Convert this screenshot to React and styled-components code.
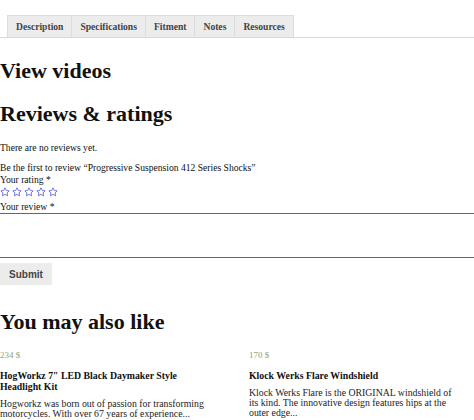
import React from 'react'
import styled, { createGlobalStyle } from 'styled-components'

const TABS = ['Description', 'Specifications', 'Fitment', 'Notes', 'Resources']

const PRODUCTS = [{
  price: '234 $',
  title: 'HogWorkz 7″ LED Black Daymaker Style Headlight Kit',
  excerpt: 'Hogworkz was born out of passion for transforming motorcycles. With over 67 years of experience...'
}, {
  price: '170 $',
  title: 'Klock Werks Flare Windshield',
  excerpt: 'Klock Werks Flare is the ORIGINAL windshield of its kind. The innovative design features hips at the outer edge...'
}]

const GlobalStyle = createGlobalStyle`
  body {
    margin: 0;
    background: #fff;
    color: #111;
    font-family: "Liberation Serif", "Times New Roman", serif;
    font-size: 9.6px;
  }
`

const Page = styled.div`
  width: 474px;
  height: 420px;
  overflow: hidden;
`

const TabBar = styled.ul`
  display: flex;
  list-style: none;
  margin: 0;
  padding: 15px 0 0 7px;
  border-bottom: 1px solid #d8d8d8;
`

const Tab = styled.li`
  padding: 0 8px;
  height: 21px;
  line-height: 21px;
  background: #ececec;
  border: 1px solid #dcdcdc;
  border-bottom: none;
  margin-right: -1px;
  font-weight: bold;
  font-size: 9.6px;
  color: #444;
`

const Heading = styled.h2`
  font-size: 22px;
  line-height: 25px;
  font-weight: bold;
  margin: ${props => props.top}px 0 0;
`

const Text = styled.p`
  margin: ${props => props.top || 0}px 0 0;
  line-height: 12px;
`

const Stars = styled.div`
  display: flex;
  gap: 2px;
  height: 12px;
  align-items: center;
  margin-bottom: 3px;
`

const Star = () => (
  <svg width='10' height='10' viewBox='0 0 24 24' fill='none' stroke='#4a4ad8' strokeWidth='1.8' strokeLinejoin='round'>
    <polygon points='12 2 15.09 8.26 22 9.27 17 14.14 18.18 21.02 12 17.77 5.82 21.02 7 14.14 2 9.27 8.91 8.26 12 2' />
  </svg>
)

const Review = styled.textarea`
  display: block;
  width: 100%;
  height: 45px;
  box-sizing: border-box;
  margin: 0;
  border: none;
  border-top: 1px solid #666;
  border-bottom: 1px solid #666;
  resize: none;
  outline: none;
`

const SubmitButton = styled.button`
  display: block;
  margin-top: 5px;
  width: 52px;
  height: 22px;
  border: none;
  background: #ececec;
  color: #444;
  font-family: "Liberation Sans", Arial, sans-serif;
  font-weight: bold;
  font-size: 10px;
  padding: 0;
`

const Products = styled.div`
  display: grid;
  grid-template-columns: 210px 210px;
  column-gap: 39px;
  margin-top: 15px;
`

const Price = styled.div`
  color: #8d9f78;
  font-size: 9px;
  line-height: 12px;
`

const ProductTitle = styled.h3`
  margin: 9px 0 0;
  font-size: 9.8px;
  line-height: 11px;
  font-weight: bold;
`

const Excerpt = styled.p`
  margin: 7px 0 0;
  font-size: 9.8px;
  line-height: 10px;
  color: #222;
`

export default function App () {
  return (
    <Page>
      <GlobalStyle />
      <TabBar>
        {TABS.map(tab => <Tab key={tab}>{tab}</Tab>)}
      </TabBar>

      <Heading top={20}>View videos</Heading>
      <Heading top={18}>Reviews &amp; ratings</Heading>

      <Text top={16}>There are no reviews yet.</Text>
      <Text top={8}>Be the first to review “Progressive Suspension 412 Series Shocks”</Text>
      <Text>Your rating *</Text>
      <Stars>
        {[0, 1, 2, 3, 4].map(i => <Star key={i} />)}
      </Stars>
      <Text>Your review *</Text>
      <Review />
      <SubmitButton>Submit</SubmitButton>

      <Heading top={24}>You may also like</Heading>

      <Products>
        {PRODUCTS.map(product => (
          <div key={product.title}>
            <Price>{product.price}</Price>
            <ProductTitle>{product.title}</ProductTitle>
            <Excerpt>{product.excerpt}</Excerpt>
          </div>
        ))}
      </Products>
    </Page>
  )
}
